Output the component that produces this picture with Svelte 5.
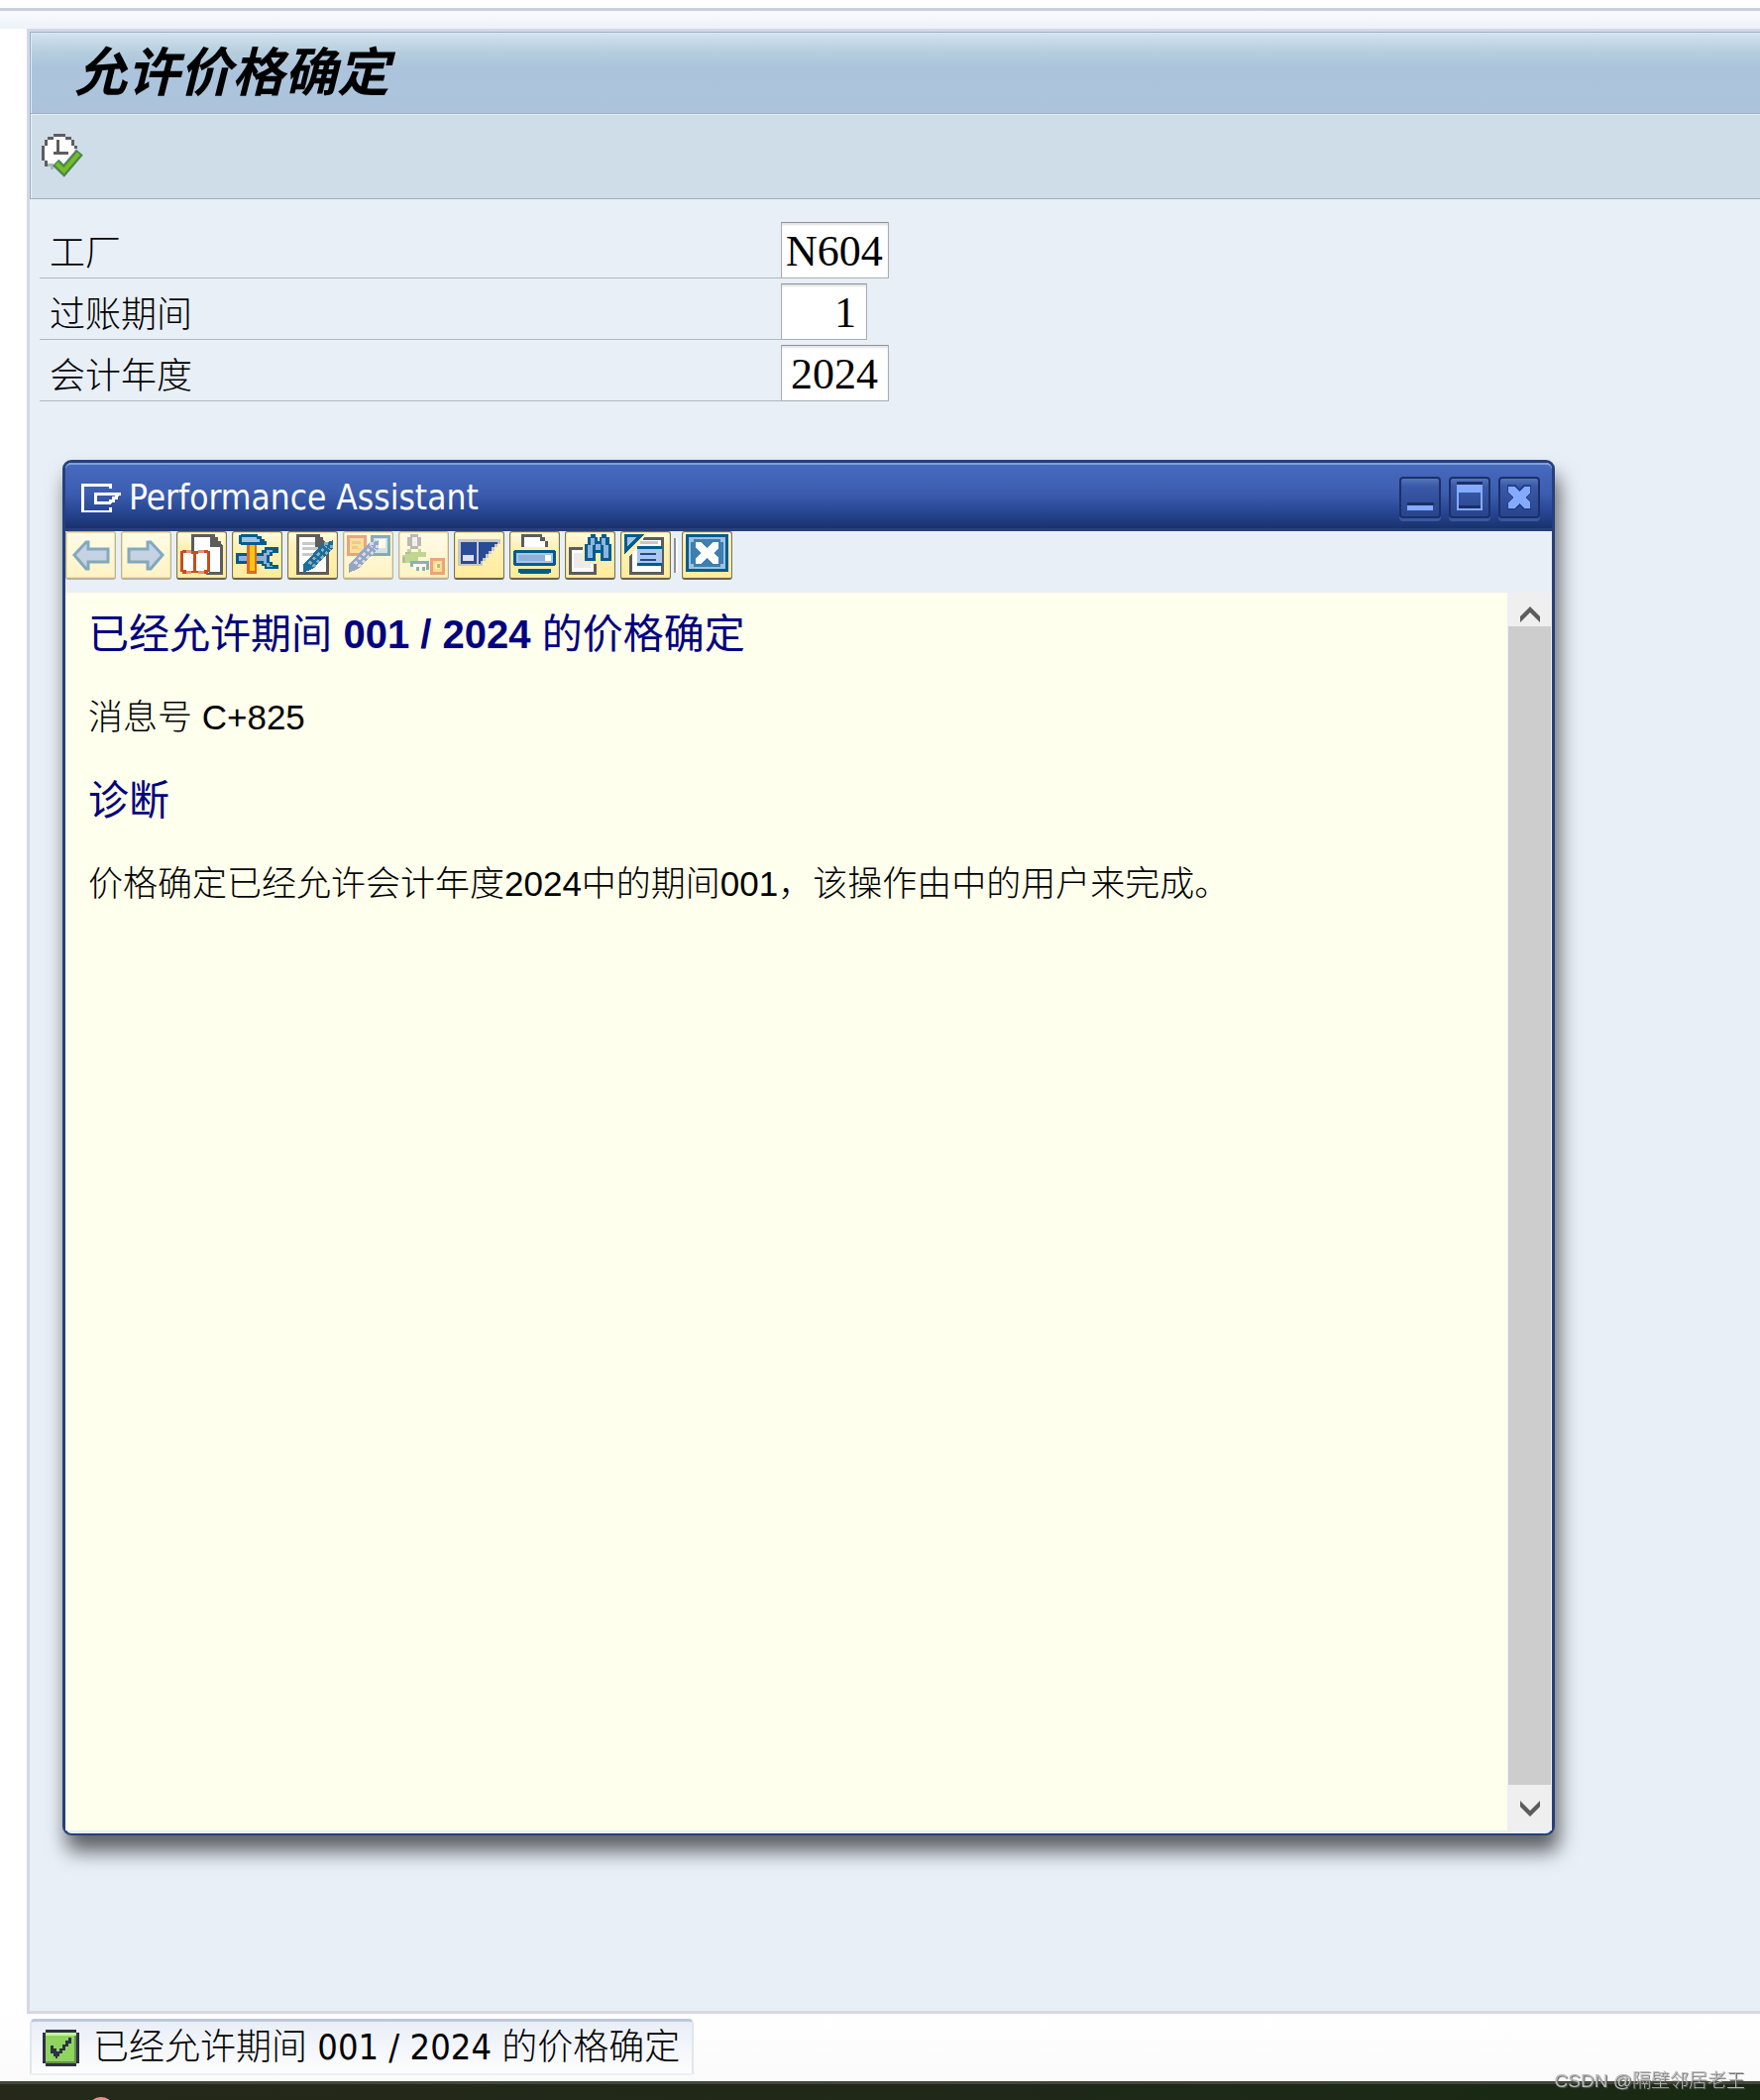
<script>
    let plant = $state('N604');
    let period = $state('1');
    let year = $state('2024');
</script>

{#snippet pen(body, edge)}
    <path d="M16 42v-8l21-23h4l5-2v9L25 38z" fill={edge} />
    <path d="M22 33L39 15M26 36L43 18" stroke={body} stroke-width="3" stroke-dasharray="3 3" />
    <path d="M37 11h4v3h-4zM43 14h3v3h-3z" fill={body} />
{/snippet}

<div class="app">
    <div class="top-strip"></div>

    <main class="workspace">
        <header class="title-bar">
            <h1>允许价格确定</h1>
        </header>

        <div class="app-toolbar">
            <button class="execute" aria-label="执行">
                <svg viewBox="0 0 14 14" width="42" height="42">
                    <g shape-rendering="crispEdges">
                        <path d="M4 1h4v1h2v1h1v7h-3v1H3v-1H2V9H1V4h1V2h2z" fill="#fff" />
                        <path d="M4 0h4v1H4zM2 1h2v1H2zM8 1h2v1H8zM1 2h1v2H1zM10 2h1v2h-1zM0 4h1v5H0zM1 9h1v2H1zM11 4h1v1h-1z" fill="#5e5e5e" />
                        <path d="M5 2h1v5H5zM4 6h5v1H4z" fill="#5e5e5e" />
                        <path d="M2 10h2v1H2zM3 11h1v1H3z" fill="#aab4b8" />
                    </g>
                    <path d="M4.7 9.7L7.5 12.4L12.8 6.2" fill="none" stroke="#4a8658" stroke-width="3" />
                    <path d="M5 10L7.5 12.4L12.5 6.6" fill="none" stroke="#77bd1e" stroke-width="1.4" />
                </svg>
            </button>
        </div>

        <form class="selection">
            <label for="plant">工厂</label>
            <input id="plant" class="wide" bind:value={plant} />
            <label for="period">过账期间</label>
            <input id="period" class="numeric" bind:value={period} />
            <label for="year">会计年度</label>
            <input id="year" class="wide numeric" bind:value={year} />
        </form>

        <div class="dialog" role="dialog" aria-labelledby="dialog-title">
            <div class="dialog-title">
                <svg viewBox="0 0 40 29" width="40" height="29" fill="none" stroke="#fff" stroke-width="3" shape-rendering="crispEdges">
                    <path d="M29 5V1H1v27h28v-4" />
                    <path d="M40 10H14v9h16M38 11h-3v3h-3v3h-3v3" />
                </svg>
                <h2 id="dialog-title">Performance Assistant</h2>
                <div class="window-buttons">
                    <button aria-label="最小化">
                        <svg viewBox="0 0 42 42" shape-rendering="crispEdges">
                            <path d="M8 26h27v3H8z" fill="#1b2f66" />
                            <path d="M8 29h26v5H8z" fill="#84abff" />
                        </svg>
                    </button>
                    <button aria-label="最大化">
                        <svg viewBox="0 0 42 42" shape-rendering="crispEdges">
                            <path d="M8 5h26v3H8zM10 29h22v3H10z" fill="#1b2f66" />
                            <path d="M8 8h26v26H8zM10 16v16h22V16z" fill="#84abff" fill-rule="evenodd" />
                        </svg>
                    </button>
                    <button aria-label="关闭">
                        <svg viewBox="0 0 42 42" shape-rendering="crispEdges">
                            <path d="M9 8h8l4 4 4-4h8v8l-5 5 5 5v8h-8l-4-4-4 4H9v-8l5-5-5-5z" fill="#25408a" />
                            <path d="M10 10h6l5 5 5-5h6v6l-5 5 5 5v6h-6l-5-5-5 5h-6v-6l5-5-5-5z" fill="#84abff" />
                        </svg>
                    </button>
                </div>
            </div>

            <div class="dialog-toolbar">
                <button class="tool" disabled aria-label="后退">
                    <svg viewBox="0 0 51 49">
                        <path d="M9 24L21 11h2v7h20v13H23v7h-2z" fill="#8dafee" stroke="#0a5da8" stroke-width="3" />
                    </svg>
                </button>
                <button class="tool" disabled aria-label="前进">
                    <svg viewBox="0 0 51 49">
                        <path d="M42 24L30 11h-3v7H8v13h19v7h3z" fill="#8dafee" stroke="#0a5da8" stroke-width="3" />
                    </svg>
                </button>
                <button class="tool" aria-label="应用程序帮助">
                    <svg viewBox="0 0 51 49" shape-rendering="crispEdges">
                        <path d="M16 20V4h19l10 11v27H30" fill="#fff" stroke="#5c5c5c" stroke-width="3" />
                        <path d="M34 3h5v3h3v4h3v6H34z" fill="#5c5c5c" />
                        <path d="M5 20h28v22H5z" fill="#fff" />
                        <path d="M10 19h5v3h-5zM22 19h6v3h-6zM10 40h5v3h-5zM22 40h6v3h-6z" fill="#dd9479" />
                        <path d="M4 20h3v21H4zM17 22h3v20h-3zM31 20h3v21h-3zM6 19h4v3H6zM15 20h7v3h-7zM28 19h4v3h-4zM6 39h4v4H6zM15 40h7v2h-7zM28 39h4v4h-4z" fill="#c54d1e" />
                    </svg>
                </button>
                <button class="tool" aria-label="工具">
                    <svg viewBox="0 0 51 49" shape-rendering="crispEdges">
                        <path d="M4 22h26v-3h3v-3h14v6h-6v3h-3v6h3v3h6v4H33v-3h-3v-2H4z" fill="#005c8e" />
                        <path d="M7 25h25v-3h3v-3h6v2h-3v3h-3v8h3v3h3v1h-6v-3h-3v-3H7z" fill="#8fb2d9" />
                        <path d="M7 4h2V3h17v2h4v3h3v2h2v4H9v-1H7z" fill="#005c8e" />
                        <path d="M10 6h15v2h3v3H10z" fill="#a4c1e6" />
                        <path d="M15 14h10v29H15z" fill="#dc6b22" />
                        <path d="M18 14h5v26h-5z" fill="#ffc412" />
                    </svg>
                </button>
                <button class="tool" aria-label="编辑文档">
                    <svg viewBox="0 0 51 49" shape-rendering="crispEdges">
                        <path d="M10 4h19l11 11v27H10z" fill="#fff" stroke="#5c5c5c" stroke-width="3" />
                        <path d="M28 3h5v3h3v5h3v6H28z" fill="#5c5c5c" />
                        <path d="M15 11h13v3H15zM15 16h16v3H15zM15 22h11v3H15z" fill="#c8c8c8" />
                        {@render pen('#86aebf', '#1d6d9c')}
                    </svg>
                </button>
                <button class="tool" disabled aria-label="翻译">
                    <svg viewBox="0 0 51 49" shape-rendering="crispEdges">
                        <path d="M5 5h17v18H5z" fill="#f9cc4c" stroke="#d4502b" stroke-width="3" />
                        <path d="M9 11h9M9 16h6" stroke="#e3984a" stroke-width="3" />
                        <path d="M29 5h17v18H29z" fill="#a8cdec" stroke="#0d608f" stroke-width="3" />
                        <path d="M34 8h9v9h-9z" fill="#fff" />
                        <g transform="translate(-10 0)">{@render pen('#b9bcf0', '#2f58b8')}</g>
                    </svg>
                </button>
                <button class="tool" disabled aria-label="权限">
                    <svg viewBox="0 0 51 49" shape-rendering="crispEdges">
                        <path d="M12 3h8v3h3v9h-3v3h-8v-3H9V6h3z" fill="#7a7a84" />
                        <path d="M14 6h5v9h-5z" fill="#e8e8f8" />
                        <path d="M9 18h4v3h7v-3h3v3h5v5h-8v6H4v-8h3v-3h2z" fill="#86b74e" />
                        <path d="M4 26h3v6H4zM7 21h5v2H7z" fill="#5a8c6d" />
                        <path d="M12 30h19v9h-3v-3h-3v4h-4v-4h-3v3h-3v-4h-3z" fill="#fff" />
                        <path d="M12 30h19v3H12zM12 33h3v3h-3zM18 36h3v4h-3zM24 36h3v4h-3zM28 33h3v6h-3z" fill="#1a6fa0" />
                        <path d="M33 28h12v14H33z" fill="#f9cc4c" stroke="#d9562c" stroke-width="3" />
                        <path d="M37 32h5v6h-5z" fill="#fff0a0" />
                        <path d="M39 33h3v4h-3z" fill="#8a7a3c" />
                    </svg>
                </button>
                <button class="tool" aria-label="更改布局">
                    <svg viewBox="0 0 51 49" shape-rendering="crispEdges">
                        <path d="M4 8h43v5h-3v3h-3v4h-3v3h-3v4h-3v3h-3v5H4z" fill="#c8c8c8" />
                        <path d="M7 11h16v22H7zM25 11h19v2h-3v3h-3v4h-3v3h-3v4h-3v3h-2v3h-2z" fill="#2a4b96" />
                        <path d="M9 24h11v6H9z" fill="#dfe1e6" />
                    </svg>
                </button>
                <button class="tool" aria-label="打印">
                    <svg viewBox="0 0 51 49" shape-rendering="crispEdges">
                        <path d="M12 3h21v3h3v4h3v6H12z" fill="#5c5c5c" />
                        <path d="M15 6h16v4h5v6H15z" fill="#fff" />
                        <path d="M4 20h1v-1h41v1h1v14h-1v1H5v-1H4z" fill="#005c8e" />
                        <path d="M7 22h37v10H7z" fill="#a8c6ea" />
                        <path d="M9 24h27v6H9z" fill="#8fb0d8" />
                        <path d="M36 24h6v6h-6z" fill="#fff" />
                        <path d="M9 38h33v4h-2v1H11v-1H9z" fill="#005c8e" />
                    </svg>
                </button>
                <button class="tool" aria-label="查找">
                    <svg viewBox="0 0 51 49" shape-rendering="crispEdges">
                        <path d="M5 17h25v25H5z" fill="#fbfbfb" stroke="#5c5c5c" stroke-width="3" />
                        <path d="M9 22h17v15H9z" fill="#ebebeb" />
                        <path d="M18 15h14v18H18z" fill="#fff0b0" />
                        <path d="M23 6h3V3h5v3h2v4h2V6h2V3h5v3h3v7h2v17H36V22h-5v8H20V13h3z" fill="#005c8e" />
                        <path d="M23 14h5v13h-5zM39 14h5v13h-5zM26 7h4v7h-4zM37 7h4v7h-4zM31 13h5v6h-5z" fill="#8db6df" />
                    </svg>
                </button>
                <button class="tool" aria-label="显示原文">
                    <svg viewBox="0 0 51 49" shape-rendering="crispEdges">
                        <path d="M10 7h32v35H10z" fill="#fff" stroke="#5c5c5c" stroke-width="3" />
                        <path d="M3 3h24L9 26H3z" fill="#fff0b0" />
                        <path d="M20 10h18v3H20z" fill="#c8c8c8" />
                        <path d="M5 4h16L5 20z" fill="#a4c4e8" stroke="#005c8e" stroke-width="3" />
                        <path d="M17 15h25v20H17z" fill="#a9c9ee" />
                        <path d="M17 15h25v3H17zM17 32h25v3H17z" fill="#005c8e" />
                        <path d="M20 22h16v2H20zM20 28h16v2H20z" fill="#26468f" />
                    </svg>
                </button>
                <span class="separator"></span>
                <button class="tool" aria-label="退出">
                    <svg viewBox="0 0 51 49" shape-rendering="crispEdges">
                        <path d="M4 3h43v38H4z" fill="#005c8e" />
                        <path d="M7 6h37v32H7z" fill="#9fc0e2" />
                        <path d="M12 8h27v3h3v22h-3v3H12v-3H9V11h3z" fill="#3d7fb0" />
                        <path d="M14 11h6l5 6h1l5-6h6v6l-5 5 5 5v6h-6l-5-6h-1l-5 6h-6v-6l5-5-5-5z" fill="#fff" />
                    </svg>
                </button>
            </div>

            <div class="dialog-body">
                <article>
                    <h3>已经允许期间 <b>001 / 2024</b> 的价格确定</h3>
                    <p>消息号 C+825</p>
                    <h3>诊断</h3>
                    <p>价格确定已经允许会计年度2024中的期间001，该操作由中的用户来完成。</p>
                </article>
                <div class="scrollbar">
                    <button aria-label="向上滚动">
                        <svg viewBox="0 0 20 16" width="20" height="16"><path d="M0 10L10 0l10 10v6L10 6 0 16z" fill="#5c5c5c" /></svg>
                    </button>
                    <div class="thumb"></div>
                    <button class="down" aria-label="向下滚动">
                        <svg viewBox="0 0 20 16" width="20" height="16"><path d="M0 0l10 10L20 0v6L10 16 0 6z" fill="#5c5c5c" /></svg>
                    </button>
                </div>
            </div>
        </div>
    </main>

    <footer>
        <div class="status">
            <svg viewBox="0 0 37 37" width="37" height="37" shape-rendering="crispEdges">
                <path d="M3 0h31v3h3v31h-3v3H3v-3H0V3h3z" fill="#2f3045" />
                <path d="M3 3h31v31H3z" fill="#8fd460" />
                <path d="M3 3h31v3H3z" fill="#c4f59a" />
                <path d="M3 32h31v2H3zM32 6h2v28h-2z" fill="#629449" />
                <path d="M26 8h3v6h-3v3h-3v4h-3v3h-3v3h-2v2h-2v-2h-2v-3H8v-8h3v3h3v3h3v-3h3v-4h3v-4h3z" fill="#2f3045" />
            </svg>
            <span>已经允许期间 001 / 2024 的价格确定</span>
        </div>
    </footer>

    <div class="desktop">
        <span class="dot"></span>
    </div>
    <span class="watermark">CSDN @隔壁邻居老王</span>
</div>

<style>
    :global(body) {
        margin: 0;
        background-color: #fff;
    }

    .app {
        display: flex;
        flex-direction: column;
        min-height: 100vh;
        color: #000;
        font-family: "Liberation Sans", "Noto Sans CJK SC", sans-serif;
        font-weight: 300;
    }

    h1, h2, h3, p {
        margin: 0;
    }

    button {
        display: flex;
        align-items: center;
        justify-content: center;
        padding: 0;
        border: none;
        background: none;
        cursor: pointer;
    }

    svg {
        display: block;
        flex: none;
    }

    .top-strip {
        height: 18px;
        margin-top: 8px;
        border-top: 3px solid #c9d0dc;
        background: linear-gradient(#f8fafc, #edf2f9);
    }

    .workspace {
        display: flex;
        flex: 1;
        flex-direction: column;
        margin-left: 27px;
        border: 3px solid #d3d8e4;
        border-right: none;
        background-color: #e8eff7;
    }

    .title-bar {
        box-sizing: border-box;
        height: 83px;
        padding-left: 44px;
        border: 1px solid #9bb0c8;
        border-right: none;
        background: linear-gradient(#d3e3f0, #b5cddc 25%, #abc4dc 45%, #adc3dc);
        box-shadow: inset 1px 1px #dbe8f3;
    }

    h1 {
        font-family: "Noto Sans CJK SC", sans-serif;
        font-size: 53px;
        font-style: italic;
        font-weight: bold;
        line-height: 72px;
    }

    .app-toolbar {
        display: flex;
        align-items: center;
        box-sizing: border-box;
        height: 86px;
        padding: 0 0 3px 11px;
        border: 1px solid #9bb0c8;
        border-width: 0 0 1px 1px;
        background-color: #cfdde8;
        box-shadow: inset 1px 1px #e6eff6;
    }

    .execute svg {
        overflow: visible;
    }

    .selection {
        display: grid;
        grid-template-columns: 748px auto;
        row-gap: 5px;
        justify-content: start;
        margin: 23px 0 0 10px;
    }

    .selection label {
        box-sizing: border-box;
        height: 57px;
        padding-left: 10px;
        border-bottom: 1px solid #b4b7bb;
        font-family: "Noto Sans CJK SC", sans-serif;
        font-size: 36px;
        line-height: 56px;
    }

    .selection input {
        box-sizing: border-box;
        width: 87px;
        height: 57px;
        padding: 2px 4px 0;
        border: 1px solid #a9adb2;
        border-top-color: #8f9296;
        border-radius: 1px;
        background-color: #fff;
        box-shadow: inset 0 2px 2px #e2e2e4;
        color: #000;
        font-family: "Liberation Serif", serif;
        font-size: 44px;
    }

    .selection input.wide {
        width: 109px;
    }

    .selection input.numeric {
        padding-right: 10px;
        text-align: right;
    }

    .dialog {
        display: flex;
        flex: 1;
        flex-direction: column;
        margin: 59px 207px 177px 33px;
        border: 3px solid #27407a;
        border-bottom-width: 2px;
        border-radius: 9px;
        background-color: #e8eff7;
        box-shadow: 4px 16px 20px rgba(0, 0, 0, 0.6);
    }

    .dialog-title {
        display: flex;
        align-items: center;
        box-sizing: border-box;
        height: 69px;
        padding: 2px 12px 0 16px;
        border-top: 2px solid #7f9fdb;
        border-bottom: 3px solid #27407a;
        border-radius: 6px 6px 0 0;
        background: linear-gradient(#476abf, #3c5daf 45%, #274592 75%, #19326d);
    }

    h2 {
        flex: 1;
        margin-left: 8px;
        color: #fff;
        font-family: "DejaVu Sans Condensed", "DejaVu Sans", sans-serif;
        font-size: 35px;
        font-weight: normal;
        line-height: 48px;
    }

    .window-buttons {
        display: flex;
        gap: 8px;
    }

    .window-buttons button {
        box-sizing: border-box;
        width: 42px;
        height: 42px;
        border: 2px solid #1b3068;
        border-radius: 4px;
        background: linear-gradient(#5475bc, #3a59a8 20%, #28448c);
        box-shadow: 0 3px #3c589d;
    }

    .window-buttons svg {
        width: 42px;
        height: 42px;
    }

    .dialog-toolbar {
        display: flex;
        gap: 5px;
        height: 62px;
    }

    .tool {
        box-sizing: border-box;
        width: 51px;
        height: 49px;
        border: 1px solid #7b7455;
        border-bottom: 2px solid #6b6650;
        border-radius: 3px;
        background: linear-gradient(#fffbe4, #fff1b8 30%, #ffec9c);
        box-shadow: inset 0 0 0 1px #f3e3a0;
    }

    .tool svg {
        width: 51px;
        height: 49px;
    }

    .tool:disabled {
        border-color: #b9b499;
        background: linear-gradient(#fffbe8, #fff3c4);
    }

    .tool:disabled svg {
        opacity: 0.5;
    }

    .separator {
        width: 2px;
        height: 35px;
        margin: 7px -1px 0 -2px;
        border-right: 2px solid #fff;
        background-color: #8f9195;
    }

    .dialog-body {
        display: flex;
        flex: 1;
        margin-bottom: 3px;
        background-color: #feffec;
    }

    article {
        flex: 1;
        padding: 0 23px;
    }

    article h3, article p {
        line-height: 84px;
    }

    article h3 {
        color: #000080;
        font-size: 41px;
        font-weight: normal;
    }

    article b {
        font-size: 40px;
        font-weight: bold;
    }

    article p {
        font-size: 35px;
    }

    .scrollbar {
        display: flex;
        flex-direction: column;
        width: 45px;
        background-color: #efefef;
    }

    .scrollbar button {
        box-sizing: border-box;
        height: 34px;
        padding-top: 10px;
    }

    .scrollbar .down {
        height: 46px;
        padding: 2px 0 0;
    }

    .thumb {
        flex: 1;
        margin: 0 1px;
        background-color: #cdcdcd;
    }

    footer {
        display: flex;
        height: 63px;
        padding: 5px 0 0 30px;
        background: linear-gradient(#fff, #fafafa);
    }

    .status {
        display: flex;
        align-items: center;
        box-sizing: border-box;
        height: 57px;
        padding: 0 12px 0 11px;
        border: 2px solid;
        border-top-width: 3px;
        border-color: #bcc8d9 #dfe6ee transparent;
        border-radius: 5px 5px 0 0;
        background: linear-gradient(#e9eff7, #fdfdfe);
    }

    .status span {
        margin-left: 14px;
        font-family: "DejaVu Sans Condensed", "Noto Sans CJK SC", sans-serif;
        font-size: 36px;
        line-height: 52px;
        white-space: nowrap;
    }

    .desktop {
        height: 16px;
        overflow: hidden;
        border-top: 3px solid #424838;
        background: linear-gradient(90deg, #26291a, #1f2818 60%, #182a12);
    }

    .dot {
        display: block;
        width: 28px;
        height: 28px;
        margin: 13px 0 0 88px;
        border-radius: 50%;
        background-color: #f58a93;
    }

    /* stamped over both the status bar and the desktop edge */
    .watermark {
        position: fixed;
        right: 15px;
        bottom: 5px;
        color: #b8b8b8;
        font-size: 19px;
        line-height: 28px;
        text-shadow: 1px 1px 1px #555;
    }
</style>
